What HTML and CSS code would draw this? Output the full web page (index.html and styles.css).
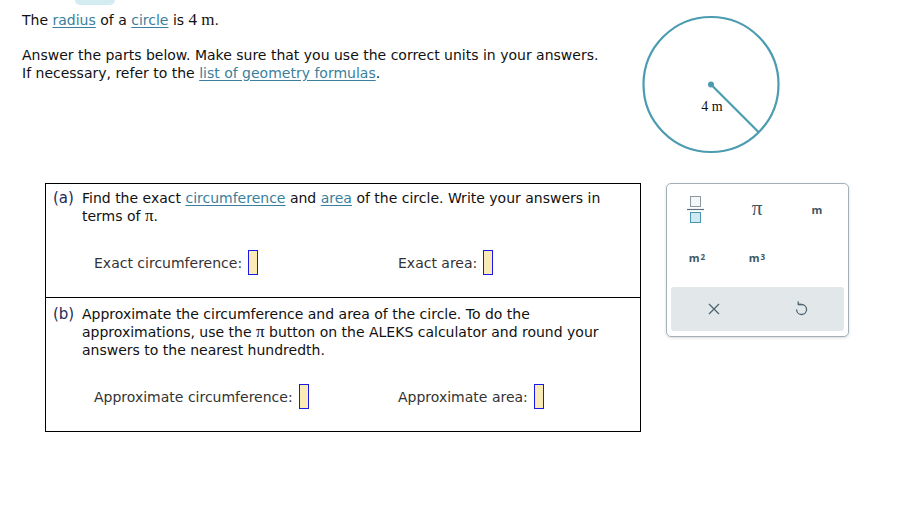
FILE: index.html
```html
<!DOCTYPE html>
<html lang="en">
<head>
<meta charset="utf-8">
<title>Circle problem</title>
<link rel="stylesheet" href="styles.css">
</head>
<body>
<div class="page">
  <div class="tab"></div>
  <div class="top">
    <div class="intro">
      <p class="p1">The <a href="#">radius</a> of a <a href="#">circle</a> is <span class="math">4 m</span>.</p>
      <p class="p2">Answer the parts below. Make sure that you use the correct units in your answers.<br>If necessary, refer to the <a href="#">list of geometry formulas</a>.</p>
    </div>
    <svg class="figure" width="140" height="140" viewBox="0 0 140 140">
      <circle cx="70" cy="69.5" r="67.5" fill="none" stroke="#4b9bb1" stroke-width="2.2"/>
      <line x1="70" y1="69.5" x2="117.7" y2="117.2" stroke="#4b9bb1" stroke-width="2.2"/>
      <circle cx="70" cy="69.5" r="3" fill="#4b9bb1"/>
      <text x="71" y="96" text-anchor="middle" class="fig-label">4 m</text>
    </svg>
  </div>
  <div class="work">
    <div class="parts">
      <div class="part part-a">
        <div class="question">
          <span class="plabel">(a)</span>
          <span class="qtext">Find the exact <a href="#">circumference</a> and <a href="#">area</a> of the circle. Write your answers in<br>terms of <span class="math">π</span>.</span>
        </div>
        <div class="answers">
          <div class="ans ans-1"><span class="alabel">Exact circumference:</span><span class="box"></span></div>
          <div class="ans"><span class="alabel">Exact area:</span><span class="box"></span></div>
        </div>
      </div>
      <div class="part part-b">
        <div class="question">
          <span class="plabel">(b)</span>
          <span class="qtext">Approximate the circumference and area of the circle. To do the<br>approximations, use the <span class="math">π</span> button on the ALEKS calculator and round your<br>answers to the nearest hundredth.</span>
        </div>
        <div class="answers">
          <div class="ans ans-1"><span class="alabel">Approximate circumference:</span><span class="box"></span></div>
          <div class="ans"><span class="alabel">Approximate area:</span><span class="box"></span></div>
        </div>
      </div>
    </div>
    <div class="calc">
      <div class="keys">
        <button class="key" type="button" aria-label="fraction">
          <svg width="20" height="28" viewBox="0 0 20 28">
            <rect x="3.5" y="1.5" width="10" height="10" fill="#f4f6f7" stroke="#8b9aa1" stroke-width="1"/>
            <line x1="0" y1="14.5" x2="17" y2="14.5" stroke="#5d7079" stroke-width="1.2"/>
            <rect x="3.5" y="17.5" width="10" height="10" fill="#cfe9f3" stroke="#4b93ab" stroke-width="1"/>
          </svg>
        </button>
        <button class="key key-pi" type="button">π</button>
        <button class="key key-unit" type="button">m</button>
        <button class="key key-unit" type="button">m<sup>2</sup></button>
        <button class="key key-unit" type="button">m<sup>3</sup></button>
        <span class="key"></span>
      </div>
      <div class="bar">
        <button class="key" type="button" aria-label="clear">
          <svg width="12" height="12" viewBox="0 0 12 12">
            <path d="M1 1 L11 11 M11 1 L1 11" stroke="#4e6570" stroke-width="1.3" fill="none"/>
          </svg>
        </button>
        <button class="key" type="button" aria-label="undo">
          <svg width="14" height="16" viewBox="0 0 14 16">
            <path d="M5.5 3.5 H7.5 A5 5 0 1 1 2.6 9" stroke="#4e6570" stroke-width="1.3" fill="none" stroke-linecap="round"/>
            <path d="M4.2 0.8 V3.5 H6.5" stroke="#4e6570" stroke-width="1.3" fill="none" stroke-linecap="round" stroke-linejoin="round"/>
          </svg>
        </button>
      </div>
    </div>
  </div>
</div>
</body>
</html>
```
FILE: styles.css
```css
* { box-sizing: border-box; }
html, body { margin: 0; padding: 0; background: #fff; }
body {
  font-family: "DejaVu Sans", Verdana, sans-serif;
  font-size: 14px;
  line-height: 18px;
  color: #111;
}
a { color: #3a7f9c; text-decoration: underline; text-underline-offset: 2px; }
.math { font-family: "Liberation Serif", "Times New Roman", serif; font-size: 17px; }
p { margin: 0; }

.page { padding-left: 22px; }
.tab {
  width: 40px; height: 5px; margin-left: 53px;
  background: #d4ebf2; border-radius: 0 0 7px 7px;
}
.top { display: flex; align-items: flex-start; margin-top: 6px; }
.intro { width: 619px; }
.p2 { margin-top: 17px; }
.figure { display: block; margin-top: 4px; }
.fig-label { font-family: "Liberation Serif", "Times New Roman", serif; font-size: 14px; fill: #111; }

.work { display: flex; align-items: flex-start; margin-top: 28px; }
.parts { width: 596px; margin-left: 23px; }
.part { border: 1px solid #000; }
.part-a { height: 115px; padding-top: 5px; }
.part-b { height: 135px; margin-top: -1px; padding-top: 7px; }
.question { display: flex; padding-left: 7px; }
.plabel { width: 29px; flex: none; color: #1d2b5b; font-size: 15px; }
.answers { display: flex; align-items: center; padding-left: 48px; margin-top: 25px; color: #333; }
.part-b .answers { margin-top: 25px; }
.ans { display: flex; align-items: center; }
.ans-1 { width: 304px; }
.box {
  display: inline-block; width: 10px; height: 25px; margin-left: 6px;
  background: #faeab7; border: 1px solid #1a1ae6;
}

.calc {
  width: 183px; height: 154px; margin-left: 25px;
  border: 1px solid #a3b1b7; border-radius: 5px;
  box-shadow: 0 1px 3px rgba(0,0,0,0.15);
  padding: 1px 0 5px;
  display: flex; flex-direction: column;
}
.keys { display: grid; grid-template-columns: repeat(3, 60px); grid-auto-rows: 48px; }
.key {
  display: flex; align-items: center; justify-content: center;
  background: none; border: 0; padding: 0; margin: 0;
  font-family: "Open Sans", "DejaVu Sans", sans-serif;
  color: #3d5661;
}
.key-pi { font-family: "Liberation Serif", serif; font-size: 21px; padding-bottom: 2px; }
.key-unit { font-size: 11px; font-weight: 700; }
.key-unit sup { font-size: 8px; line-height: 0; vertical-align: 4px; margin-left: 1px; }
.bar {
  display: grid; grid-template-columns: 1fr 1fr;
  height: 44px; margin: 6px 4px 0;
  background: #e2e7ea; border-radius: 3px;
}
```
